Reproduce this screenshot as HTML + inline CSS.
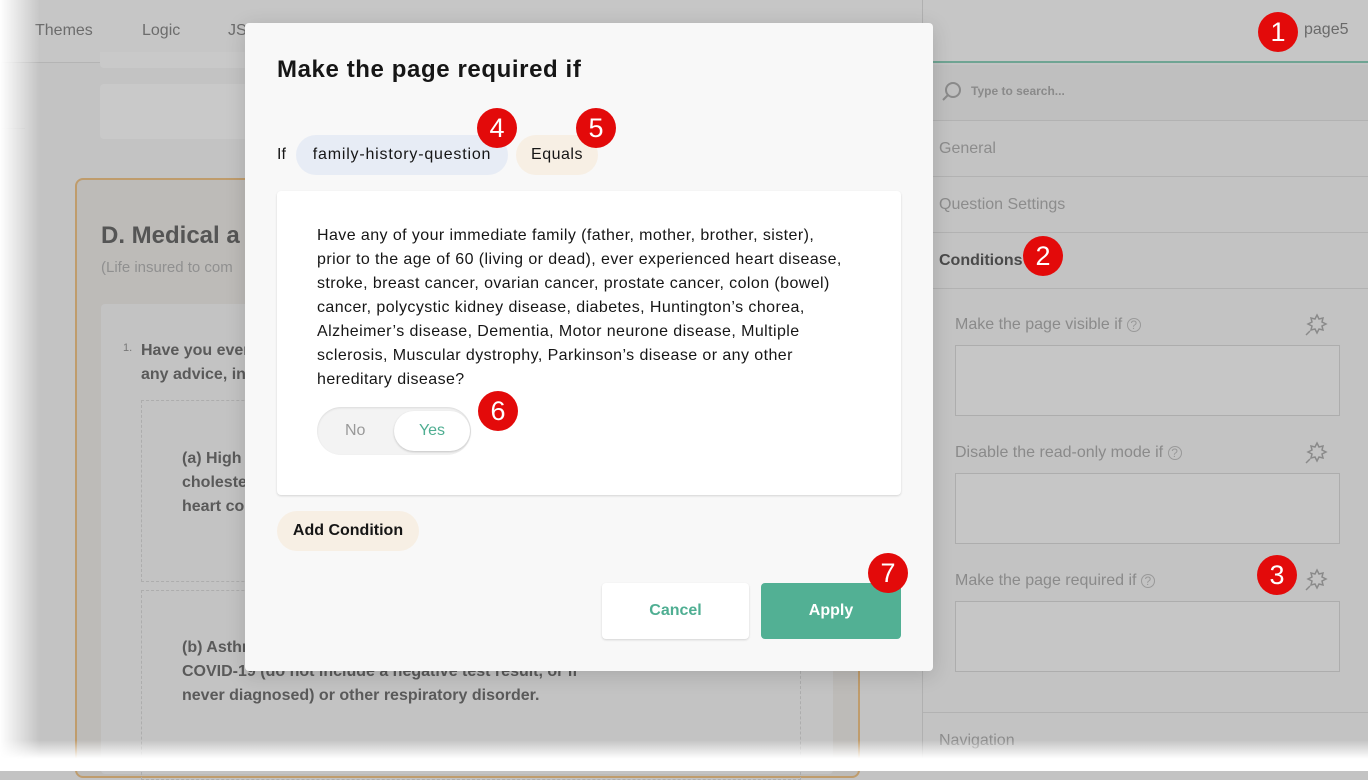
<!DOCTYPE html>
<html><head><style>
*{box-sizing:border-box;margin:0;padding:0}
body{width:1368px;height:771px;overflow:hidden;background:#c3c3c3;font-family:"Liberation Sans","DejaVu Sans",sans-serif;position:relative}
.a{position:absolute}
.badge{position:absolute;width:40px;height:40px;border-radius:50%;background:#e30a0a;color:#fff;font-size:27px;text-align:center;line-height:40px;font-family:"Liberation Sans",sans-serif}
.lbl{color:#8a8a8a;font-size:16px}
.box{position:absolute;left:955px;width:385px;height:71px;border:1px solid #adadad;background:#c6c6c6}
.row{position:absolute;left:923px;width:445px;border-top:1px solid #b2b2b2;color:#8c8c8c;font-size:16px;padding-left:16px}
</style></head><body>
<div class="a" style="left:0;top:0;width:922px;height:63px;background:#c6c6c6;border-bottom:1px solid #b4b4b4"></div>
<div class="a" style="left:35px;top:22px;font-size:16px;color:#6c6c6c">Themes</div>
<div class="a" style="left:142px;top:22px;font-size:16px;color:#6c6c6c">Logic</div>
<div class="a" style="left:228px;top:22px;font-size:16px;color:#6c6c6c">JSON</div>
<div class="a" style="left:100px;top:52px;width:690px;height:16px;background:#c9c9c9;border-radius:0 0 4px 4px"></div>
<div class="a" style="left:100px;top:84px;width:690px;height:55px;background:#c9c9c9;border-radius:4px"></div>
<div class="a" style="left:0;top:128px;width:25px;height:1px;background:#bbb"></div>
<div class="a" style="left:75px;top:178px;width:785px;height:600px;border:2px solid #bf9c6c;border-radius:8px;background:#bdbbb8"></div>
<div class="a" style="left:101px;top:222px;font-size:24px;font-weight:bold;color:#555">D. Medical a</div>
<div class="a" style="left:101px;top:259px;font-size:15px;color:#909090">(Life insured to com</div>
<div class="a" style="left:101px;top:304px;width:732px;height:470px;background:#c3c3c3;border-radius:4px"></div>
<div class="a" style="left:123px;top:342px;font-size:11px;color:#777">1.</div>
<div class="a" style="left:141px;top:339px;font-size:16px;line-height:24px;color:#5a5a5a;font-weight:bold">Have you ever<br>any advice, inv</div>
<div class="a" style="left:141px;top:400px;width:660px;height:182px;border:1px dashed #adadad"></div>
<div class="a" style="left:182px;top:447px;font-size:16px;line-height:24px;color:#5a5a5a;font-weight:bold">(a) High b<br>choleste<br>heart co</div>
<div class="a" style="left:141px;top:590px;width:660px;height:190px;border:1px dashed #adadad"></div>
<div class="a" style="left:182px;top:636px;font-size:16px;line-height:24px;color:#5a5a5a;font-weight:bold">(b) Asthma<br>COVID-19 (do not include a negative test result, or if<br>never diagnosed) or other respiratory disorder.</div>
<div class="a" style="left:922px;top:0;width:446px;height:771px;background:#c3c3c3;border-left:1px solid #b0b0b0"></div>
<div class="a" style="left:923px;top:0;width:445px;height:63px;background:#c6c6c6;border-bottom:2px solid #6fa493"></div>
<div class="a" style="left:1304px;top:21px;font-size:16px;color:#6a6a6a">page5</div>
<div class="a" style="left:923px;top:65px;width:445px;height:55px;background:#bfbfbf"></div>
<svg class="a" style="left:941px;top:80px" width="22" height="22" viewBox="0 0 22 22"><circle cx="12" cy="10" r="7" fill="none" stroke="#8a8a8a" stroke-width="2"/><path d="M7 15 L2 20" stroke="#8a8a8a" stroke-width="2"/></svg>
<div class="a" style="left:971px;top:84px;font-size:12px;color:#8a8a8a;font-weight:bold">Type to search...</div>
<div class="row" style="top:120px;height:56px;line-height:56px">General</div>
<div class="row" style="top:176px;height:56px;line-height:56px">Question Settings</div>
<div class="row" style="top:232px;height:56px;line-height:56px;color:#4a4a4a;font-weight:bold">Conditions</div>
<div class="row" style="top:288px;height:1px"></div>
<div class="a lbl" style="left:955px;top:316px">Make the page visible if <span style="font-size:12px;border:1px solid #999;border-radius:50%;display:inline-block;width:14px;height:14px;line-height:13px;text-align:center;color:#999">?</span></div>
<div class="box" style="top:345px"></div>
<div class="a lbl" style="left:955px;top:444px">Disable the read-only mode if <span style="font-size:12px;border:1px solid #999;border-radius:50%;display:inline-block;width:14px;height:14px;line-height:13px;text-align:center;color:#999">?</span></div>
<div class="box" style="top:473px"></div>
<div class="a lbl" style="left:955px;top:572px">Make the page required if <span style="font-size:12px;border:1px solid #999;border-radius:50%;display:inline-block;width:14px;height:14px;line-height:13px;text-align:center;color:#999">?</span></div>
<div class="box" style="top:601px"></div>
<svg class="a" style="left:1304px;top:313px" width="24" height="24" viewBox="0 0 24 24"><path d="M13 2l2 4 4-1-1 4 4 2-4 2 1 4-4-1-2 4-2-4-4 1 1-4-4-2 4-2-1-4 4 1z" fill="none" stroke="#8a8a8a" stroke-width="1.5"/><path d="M6 18L2 22" stroke="#8a8a8a" stroke-width="1.5"/></svg>
<svg class="a" style="left:1304px;top:441px" width="24" height="24" viewBox="0 0 24 24"><path d="M13 2l2 4 4-1-1 4 4 2-4 2 1 4-4-1-2 4-2-4-4 1 1-4-4-2 4-2-1-4 4 1z" fill="none" stroke="#8a8a8a" stroke-width="1.5"/><path d="M6 18L2 22" stroke="#8a8a8a" stroke-width="1.5"/></svg>
<svg class="a" style="left:1304px;top:568px" width="24" height="24" viewBox="0 0 24 24"><path d="M13 2l2 4 4-1-1 4 4 2-4 2 1 4-4-1-2 4-2-4-4 1 1-4-4-2 4-2-1-4 4 1z" fill="none" stroke="#8a8a8a" stroke-width="1.5"/><path d="M6 18L2 22" stroke="#8a8a8a" stroke-width="1.5"/></svg>
<div class="row" style="top:712px;height:60px;padding-top:19px">Navigation</div>
<div class="a" style="left:0;top:0;width:40px;height:771px;background:linear-gradient(90deg,#fff 0%,rgba(255,255,255,0.6) 40%,rgba(255,255,255,0))"></div>
<div class="a" style="left:0;top:740px;width:1368px;height:31px;background:linear-gradient(180deg,rgba(255,255,255,0),#fff 60%)"></div>
<div class="a" style="left:245px;top:23px;width:688px;height:648px;background:#f8f8f8;border-radius:4px;box-shadow:0 4px 20px rgba(0,0,0,0.15)"></div>
<div class="a" style="left:277px;top:56px;font-size:24px;letter-spacing:0.6px;font-weight:bold;color:#161616">Make the page required if</div>
<div class="a" style="left:277px;top:146px;font-size:16px;color:#161616">If</div>
<div class="a" style="left:296px;top:135px;width:212px;height:40px;border-radius:20px;background:#e7ecf5;font-size:16px;letter-spacing:0.8px;line-height:40px;text-align:center;color:#161616">family-history-question</div>
<div class="a" style="left:516px;top:135px;width:82px;height:40px;border-radius:20px;background:#f7efe4;font-size:16px;letter-spacing:0.5px;line-height:40px;text-align:center;color:#161616">Equals</div>
<div class="a" style="left:277px;top:191px;width:624px;height:304px;background:#fff;border-radius:4px;box-shadow:0 1px 2px rgba(0,0,0,0.15)"></div>
<div class="a" style="left:317px;top:224px;white-space:nowrap;font-size:16px;letter-spacing:0.42px;line-height:24px;color:#161616">Have any of your immediate family (father, mother, brother, sister),<br>prior to the age of 60 (living or dead), ever experienced heart disease,<br>stroke, breast cancer, ovarian cancer, prostate cancer, colon (bowel)<br>cancer, polycystic kidney disease, diabetes, Huntington’s chorea,<br>Alzheimer’s disease, Dementia, Motor neurone disease, Multiple<br>sclerosis, Muscular dystrophy, Parkinson’s disease or any other<br>hereditary disease?</div>
<div class="a" style="left:317px;top:407px;width:154px;height:48px;border-radius:24px;background:#f3f3f3;box-shadow:inset 0 1px 2px rgba(0,0,0,0.1)"></div>
<div class="a" style="left:345px;top:422px;font-size:16px;color:#999">No</div>
<div class="a" style="left:394px;top:411px;width:76px;height:40px;border-radius:20px;background:#fff;box-shadow:0 1px 2px rgba(0,0,0,0.2);font-size:16px;line-height:40px;text-align:center;color:#4fae92">Yes</div>
<div class="a" style="left:277px;top:511px;width:142px;height:40px;border-radius:20px;background:#f7efe4;font-size:16px;line-height:40px;text-align:center;color:#161616;font-weight:bold">Add Condition</div>
<div class="a" style="left:602px;top:583px;width:147px;height:56px;border-radius:4px;background:#fff;box-shadow:0 1px 2px rgba(0,0,0,0.15);font-size:16px;line-height:56px;text-align:center;color:#4fae92;font-weight:bold">Cancel</div>
<div class="a" style="left:761px;top:583px;width:140px;height:56px;border-radius:4px;background:#52b094;font-size:16px;line-height:56px;text-align:center;color:#fff;font-weight:bold">Apply</div>
<div class="badge" style="left:1258px;top:12px">1</div>
<div class="badge" style="left:1023px;top:236px">2</div>
<div class="badge" style="left:1257px;top:555px">3</div>
<div class="badge" style="left:477px;top:108px">4</div>
<div class="badge" style="left:576px;top:108px">5</div>
<div class="badge" style="left:478px;top:391px">6</div>
<div class="badge" style="left:868px;top:553px">7</div>
</body></html>
